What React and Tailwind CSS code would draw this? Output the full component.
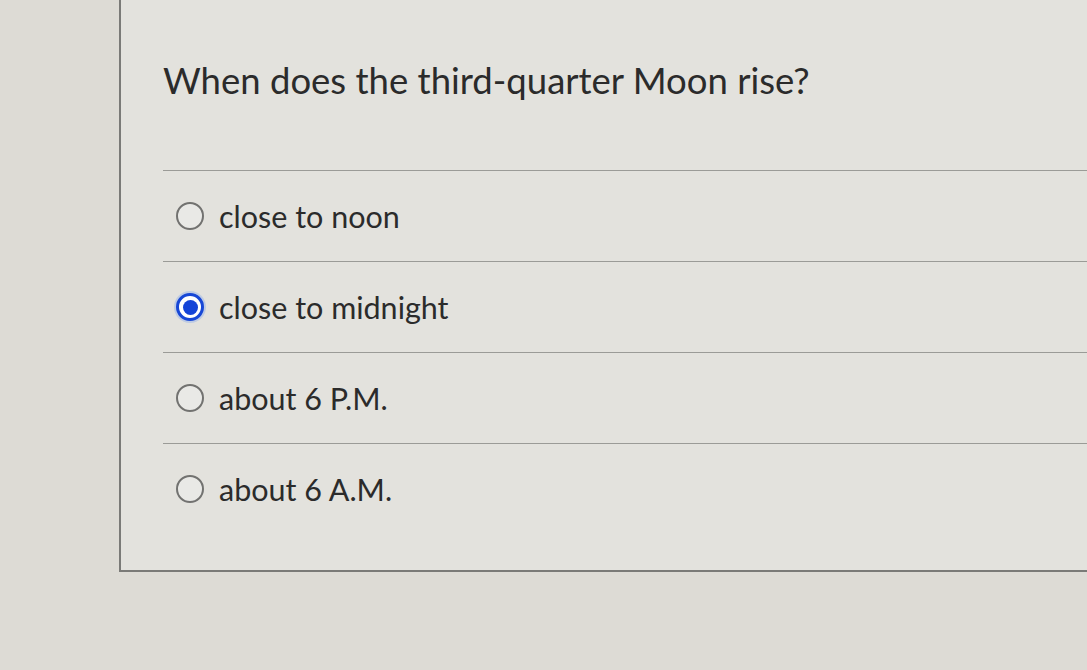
import React from 'react';

const options = [
  { id: 'noon', label: 'close to noon' },
  { id: 'midnight', label: 'close to midnight' },
  { id: 'pm', label: 'about 6 P.M.' },
  { id: 'am', label: 'about 6 A.M.' },
];

function Radio({ checked }) {
  if (checked) {
    return (
      <span className="flex h-[28px] w-[28px] shrink-0 items-center justify-center rounded-full border-[3px] border-[#1747d6] bg-white shadow-[0_0_0_2px_rgba(120,160,240,0.35)]">
        <span className="h-[15px] w-[15px] rounded-full bg-[#1444d8]" />
      </span>
    );
  }
  return (
    <span className="h-[28px] w-[28px] shrink-0 rounded-full border-2 border-[#727270] bg-[#e9e9e6]" />
  );
}

export default function App() {
  const selected = 'midnight';

  return (
    <div className="h-[670px] w-[1087px] overflow-hidden bg-[#dddbd5] pl-[119px] font-['Lato','Noto_Sans',sans-serif] text-[#2b2b2b]">
      <div className="h-[572px] border-b-2 border-l-2 border-[#7a7a77] bg-[#e3e2dd] pl-[42px]">
        <div className="h-[170px] pt-[58px]">
          <h1 className="text-[36.5px] leading-[44px] font-normal">
            When does the third-quarter Moon rise?
          </h1>
        </div>

        {/* Answer choices */}
        <div>
          {options.map(opt => (
            <label
              key={opt.id}
              className="flex h-[91px] items-center gap-[15px] border-t border-[#9b9b97] pl-[13px]"
            >
              <Radio checked={opt.id === selected} />
              <span className="text-[30.5px] leading-none">{opt.label}</span>
            </label>
          ))}
        </div>
      </div>
    </div>
  );
}
